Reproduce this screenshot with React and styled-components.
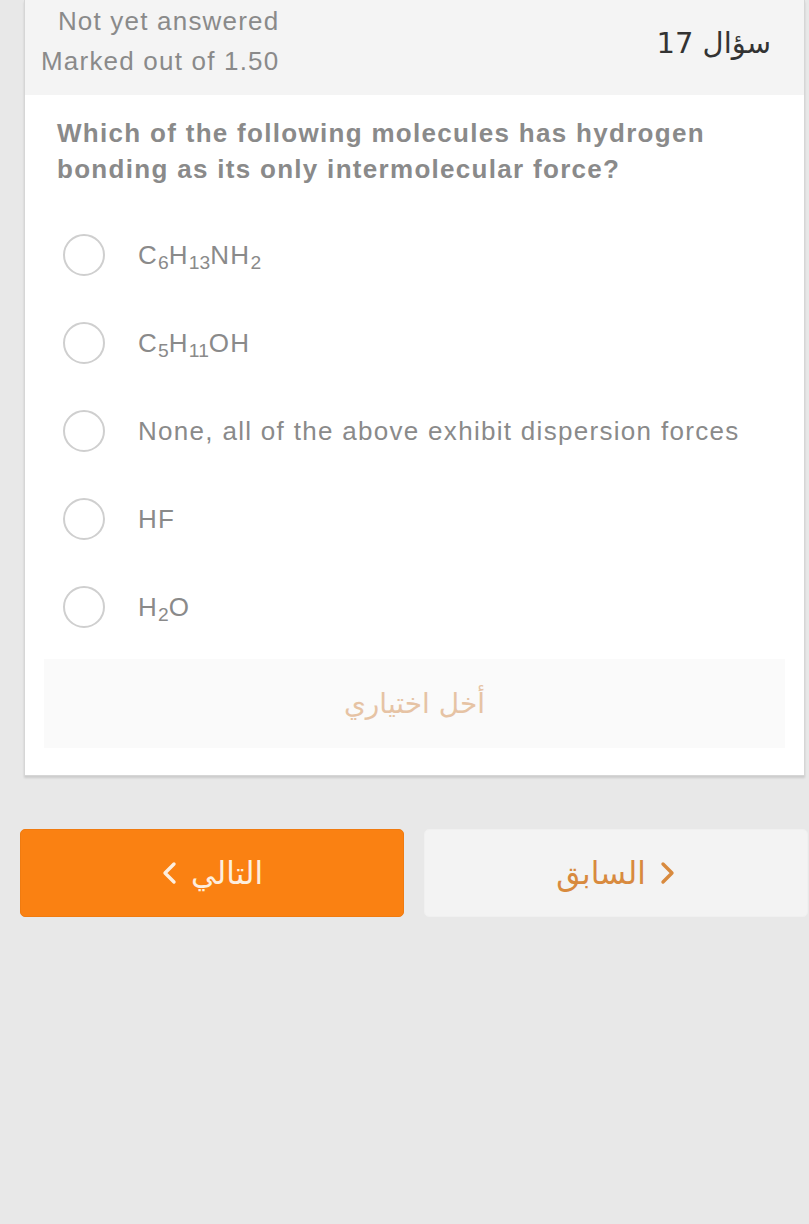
import React from 'react'
import styled, { createGlobalStyle } from 'styled-components'

const GlobalStyle = createGlobalStyle`
  html, body {
    margin: 0;
    padding: 0;
    background: #e8e8e8;
  }
  body {
    font-family: "Liberation Sans", Arial, sans-serif;
    min-height: 1224px;
  }
`

const Page = styled.div`
  width: 809px;
  min-height: 1224px;
  background: #e8e8e8;
`

const Card = styled.div`
  margin: 0 4px 0 24px;
  background: #fff;
  border: 1px solid #d6d6d6;
  border-top: none;
  box-shadow: 0 2px 2px rgba(0, 0, 0, 0.12);
  padding-bottom: 27px;
`

const Header = styled.div`
  height: 95px;
  background: #f4f4f4;
  display: flex;
  align-items: center;
  justify-content: space-between;
  padding: 0 33px 0 16px;
`

const State = styled.div`
  display: flex;
  flex-direction: column;
  align-items: flex-end;
  color: #8a8a8a;
  font-size: 26px;
  letter-spacing: 1.2px;
  line-height: 40px;
  margin-top: -14px;
`

const QNumber = styled.div`
  direction: rtl;
  font-family: "DejaVu Sans", sans-serif;
  font-size: 29px;
  color: #333;
  margin-top: -10px;
`

const Body = styled.div`
  padding: 20px 19px 0;
`

const Question = styled.div`
  padding: 0 8px 0 13px;
  font-size: 26px;
  letter-spacing: 1.3px;
  font-weight: bold;
  line-height: 36px;
  color: #8a8a8a;
  margin-bottom: 24px;
`

const Options = styled.div`
  display: flex;
  flex-direction: column;
  margin-bottom: 8px;
`

const Option = styled.label`
  display: flex;
  align-items: center;
  height: 88px;
  padding-left: 19px;
  gap: 33px;
  color: #8a8a8a;
  font-size: 26px;
  letter-spacing: 1.3px;
`

const Radio = styled.span`
  width: 38px;
  height: 38px;
  border-radius: 50%;
  border: 2px solid #cfcfcf;
  flex-shrink: 0;
`

const Sub = styled.sub`
  font-size: 0.74em;
  vertical-align: -0.28em;
  line-height: 0;
  letter-spacing: 0;
`

const ClearBox = styled.div`
  height: 89px;
  background: #fafafa;
  display: flex;
  align-items: center;
  justify-content: center;
  direction: rtl;
  font-family: "DejaVu Sans", sans-serif;
  font-size: 28px;
  color: #e6c3a4;
`

const Nav = styled.div`
  display: flex;
  gap: 20px;
  padding: 53px 1px 0 20px;
`

const NavButton = styled.button`
  flex: 1;
  height: 88px;
  border-radius: 5px;
  display: flex;
  align-items: center;
  justify-content: center;
  gap: 14px;
  direction: rtl;
  font-family: "DejaVu Sans", sans-serif;
  font-size: 31px;
  cursor: pointer;
  background: ${p => (p.$primary ? '#fa8112' : '#f3f3f3')};
  color: ${p => (p.$primary ? '#fdeede' : '#d88a3e')};
  border: 1px solid ${p => (p.$primary ? '#f07b10' : '#f0f0f0')};
`

const Chevron = ({ dir, color }) => (
  <svg width="16" height="26" viewBox="0 0 16 26">
    <path
      d={dir === 'left' ? 'M13 4 L4 13 L13 22' : 'M3 4 L12 13 L3 22'}
      fill="none"
      stroke={color}
      strokeWidth="3.4"
      strokeLinecap="round"
      strokeLinejoin="round"
    />
  </svg>
)

const options = [
  <>C<Sub>6</Sub>H<Sub>13</Sub>NH<Sub>2</Sub></>,
  <>C<Sub>5</Sub>H<Sub>11</Sub>OH</>,
  <>None, all of the above exhibit dispersion forces</>,
  <>HF</>,
  <>H<Sub>2</Sub>O</>
]

export default function App () {
  return (
    <Page>
      <GlobalStyle />
      <Card>
        <Header>
          <State>
            <span>Not yet answered</span>
            <span>Marked out of 1.50</span>
          </State>
          <QNumber>سؤال 17</QNumber>
        </Header>
        <Body>
          <Question>
            Which of the following molecules has hydrogen bonding as its only intermolecular force?
          </Question>
          <Options>
            {options.map((o, i) => (
              <Option key={i}>
                <Radio />
                <span>{o}</span>
              </Option>
            ))}
          </Options>
          <ClearBox>أخل اختياري</ClearBox>
        </Body>
      </Card>
      <Nav>
        <NavButton $primary>
          <span>التالي</span>
          <Chevron dir="left" color="#fdeede" />
        </NavButton>
        <NavButton>
          <Chevron dir="right" color="#d88a3e" />
          <span>السابق</span>
        </NavButton>
      </Nav>
    </Page>
  )
}
